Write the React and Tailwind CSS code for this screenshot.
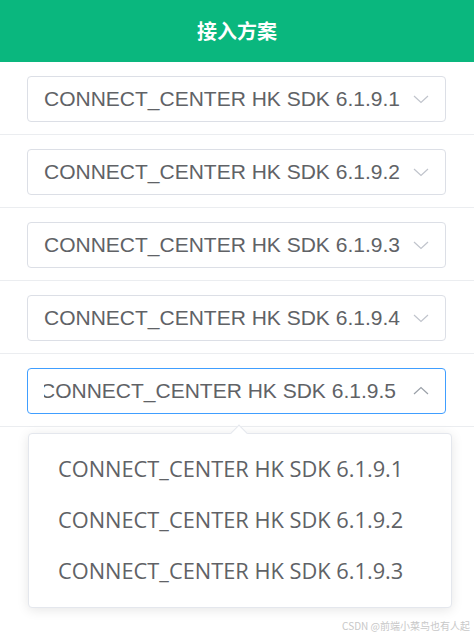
import React from "react";

const VERSIONS = ["6.1.9.1", "6.1.9.2", "6.1.9.3", "6.1.9.4", "6.1.9.5"];
const OPTIONS = ["6.1.9.1", "6.1.9.2", "6.1.9.3"];

function Chevron({ up }) {
  return (
    <svg width="16" height="14" viewBox="0 0 16 14" className="shrink-0">
      <path
        d={up ? "M1 10 L8 3.5 L15 10" : "M1 4 L8 10.5 L15 4"}
        fill="none"
        stroke={up ? "#9aa0a8" : "#c0c4cc"}
        strokeWidth="1.2"
      />
    </svg>
  );
}

function SelectRow({ version, open }) {
  return (
    <div className="h-[73px] border-b border-[#ebedf0] px-[27px] pt-[14px]">
      <div
        className={`flex h-[46px] w-[419px] items-center gap-[8px] rounded-[4px] border bg-white pl-[16px] pr-[16px] ${
          open ? "border-[#409eff]" : "border-[#dcdfe6]"
        }`}
      >
        <div className="flex-1 overflow-hidden whitespace-nowrap">
          <span className={`block text-[21px] text-[#606266] ${open ? "ml-[-4px]" : ""}`}>
            CONNECT_CENTER HK SDK {version}
          </span>
        </div>
        <Chevron up={open} />
      </div>
    </div>
  );
}

export default function App() {
  return (
    <div className="relative h-[639px] w-[474px] overflow-hidden bg-white font-['Liberation_Sans',Arial,sans-serif]">
      <div className="flex h-[62px] items-center justify-center bg-[#0ab77e]">
        <h1 className="text-[20px] font-bold text-white font-['Noto_Sans_CJK_SC',sans-serif]">接入方案</h1>
      </div>

      {VERSIONS.map((v, i) => (
        <SelectRow key={v} version={v} open={i === VERSIONS.length - 1} />
      ))}

      <div className="absolute left-[28px] top-[433px] w-[424px] rounded-[4px] border border-[#e4e7ed] bg-white py-[10px] shadow-[0_2px_12px_rgba(0,0,0,0.1)]">
        <div className="absolute left-[204px] top-[-7px] h-[12px] w-[12px] rotate-45 border-l border-t border-[#e4e7ed] bg-white" />
        {OPTIONS.map((v) => (
          <div
            key={v}
            className="flex h-[51px] items-center pl-[29px] text-[21.8px] text-[#606266] font-['Open_Sans','Noto_Sans',sans-serif]"
          >
            CONNECT_CENTER HK SDK {v}
          </div>
        ))}
      </div>

      <div className="absolute bottom-[6px] right-[4px] text-[10px] text-[#c8c8c8] font-['Noto_Sans_CJK_SC',sans-serif]">
        CSDN @前端小菜鸟也有人起
      </div>
    </div>
  );
}
